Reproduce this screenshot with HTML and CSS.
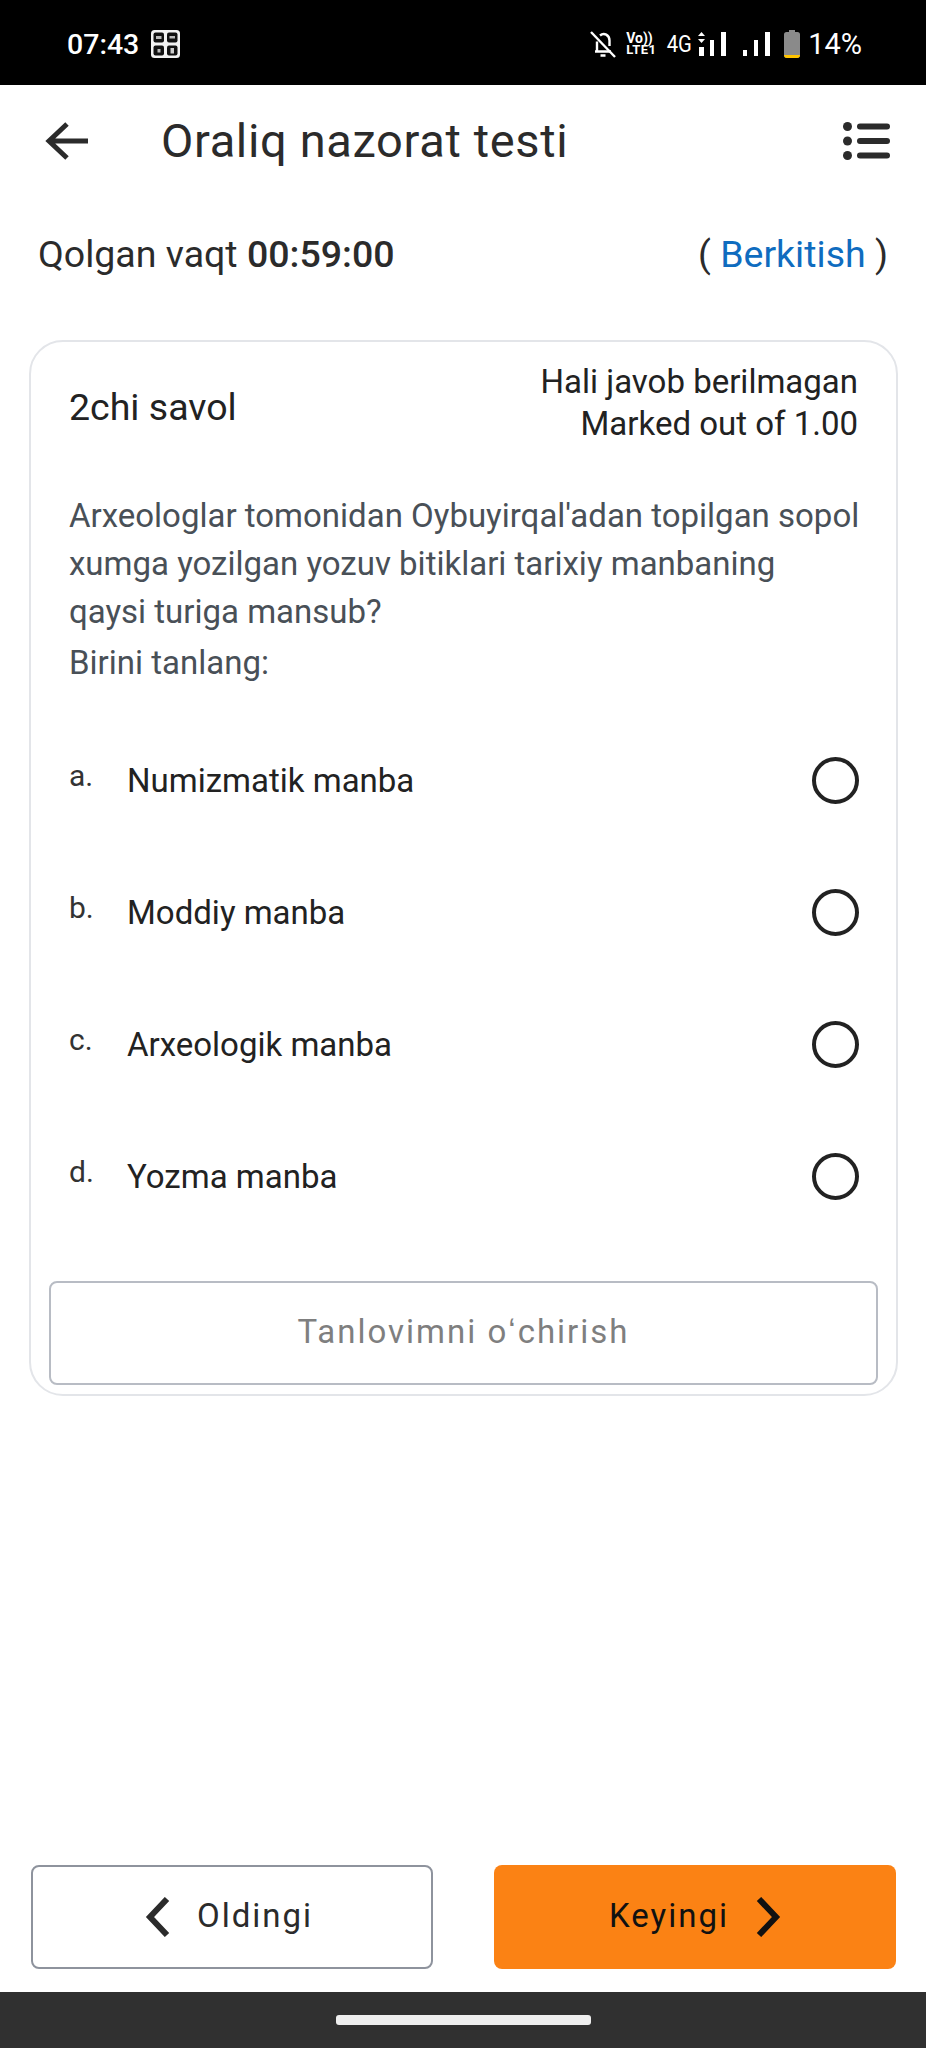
FILE: index.html
```html
<!DOCTYPE html>
<html lang="uz">
<head>
<meta charset="utf-8">
<title>Oraliq nazorat testi</title>
<link rel="stylesheet" href="styles.css">
</head>
<body>
<div class="page">
  <header class="status">
    <div class="status-left">
      <span class="clock">07:43</span>
      <svg class="grid-icon" width="29" height="28" viewBox="0 0 29 28"><rect x="0" y="0" width="29" height="28" rx="3.500" fill="#f2f2f2"/><rect x="2.500" y="2.500" width="10.500" height="10" rx="2" fill="#111"/><rect x="16" y="2.500" width="10.500" height="10" rx="2" fill="#111"/><rect x="2.500" y="15.500" width="10.500" height="10" rx="2" fill="#111"/><rect x="16" y="15.500" width="10.500" height="10" rx="2" fill="#111"/><rect x="5" y="6" width="5.500" height="3" fill="#bbb"/><rect x="18.500" y="6" width="5.500" height="2.500" fill="#bbb"/><rect x="6.500" y="19" width="3" height="3.500" fill="#bbb"/><rect x="19.500" y="18" width="3.500" height="5.500" fill="#ccc"/></svg>
    </div>
    <div class="status-right">
      <svg width="26" height="28" viewBox="0 0 26 28" fill="none" stroke="#fff" stroke-width="2.400"><path d="M5 21.500h16M7 21V11.500M10 5.500c4-3.500 9.500-.5 9.500 5V16M10.500 25.500h5" /><path d="M1 2l24 25"/></svg>
      <span class="volte"><span class="vo">Vo))</span><span class="lte">LTE1</span></span>
      <span class="net">4G</span>
      <svg width="28" height="24" viewBox="0 0 28 24" fill="#fff"><path d="M3.500 0l3.500 4H0zM3.500 11L0 7h7z"/><rect x="1" y="15" width="5" height="9"/><rect x="12" y="8" width="4" height="16"/><rect x="23" y="0" width="5" height="24"/></svg>
      <svg class="sig2" width="27" height="24" viewBox="0 0 27 24" fill="#fff"><rect x="0" y="18" width="4" height="6"/><rect x="11" y="8" width="4" height="16"/><rect x="22" y="0" width="5" height="24"/></svg>
      <svg class="batt" width="16" height="28" viewBox="0 0 16 28"><path d="M5 0h6v2h2.500A2.500 2.500 0 0 1 16 4.500V25a3 3 0 0 1-3 3H3a3 3 0 0 1-3-3V4.500A2.500 2.500 0 0 1 2.500 2H5z" fill="#8a8a8a"/><path d="M0 25h16a3 3 0 0 1-3 3H3a3 3 0 0 1-3-3z" fill="#ffc400"/></svg>
      <span class="pct">14%</span>
    </div>
  </header>

  <div class="titlebar">
    <svg class="back" width="44" height="40" viewBox="0 0 44 40" fill="none" stroke="#2b2b2b" stroke-width="5"><path d="M43 20H5M22 3L4 20l18 17"/></svg>
    <h1 class="title">Oraliq nazorat testi</h1>
    <svg class="menu" width="47" height="38" viewBox="0 0 47 38" fill="#2b2b2b"><circle cx="4.500" cy="4.500" r="4.500"/><circle cx="4.500" cy="19" r="4.500"/><circle cx="4.500" cy="33.500" r="4.500"/><rect x="14" y="1.500" width="33" height="6" rx="3"/><rect x="14" y="16" width="33" height="6" rx="3"/><rect x="14" y="30.500" width="33" height="6" rx="3"/></svg>
  </div>

  <div class="timer-row">
    <div class="timer">Qolgan vaqt <b>00:59:00</b></div>
    <div class="pin">( <a class="pin-link">Berkitish</a> )</div>
  </div>

  <section class="card">
    <div class="card-head">
      <div class="q-num">2chi savol</div>
      <div class="q-state">
        <div>Hali javob berilmagan</div>
        <div>Marked out of 1.00</div>
      </div>
    </div>
    <p class="q-text">Arxeologlar tomonidan Oybuyirqal'adan topilgan sopol<br>xumga yozilgan yozuv bitiklari tarixiy manbaning<br>qaysi turiga mansub?</p>
    <p class="q-hint">Birini tanlang:</p>
    <div class="options">
      <div class="opt"><span class="opt-l">a.</span><span class="opt-t">Numizmatik manba</span><span class="radio"></span></div>
      <div class="opt"><span class="opt-l">b.</span><span class="opt-t">Moddiy manba</span><span class="radio"></span></div>
      <div class="opt"><span class="opt-l">c.</span><span class="opt-t">Arxeologik manba</span><span class="radio"></span></div>
      <div class="opt"><span class="opt-l">d.</span><span class="opt-t">Yozma manba</span><span class="radio"></span></div>
    </div>
    <button class="clear">Tanlovimni oʻchirish</button>
  </section>

  <div class="spacer"></div>

  <nav class="pager">
    <button class="pg pg-prev">
      <svg width="26" height="40" viewBox="0 0 26 40" fill="none" stroke="#2b2b2b" stroke-width="6"><path d="M22 2L5 20l17 18"/></svg>
      <span class="pg-label">Oldingi</span>
    </button>
    <button class="pg pg-next">
      <span class="pg-label">Keyingi</span>
      <svg width="26" height="40" viewBox="0 0 26 40" fill="none" stroke="#111" stroke-width="6"><path d="M4 2l17 18L4 38"/></svg>
    </button>
  </nav>

  <footer class="navbar"><div class="pill"></div></footer>
</div>
</body>
</html>
```

FILE: styles.css
```css
* { box-sizing: border-box; }
html, body { margin: 0; padding: 0; background: #fff; }
body { font-family: Roboto, "Liberation Sans", sans-serif; color: #2b2b2b; }
.page { width: 926px; height: 2048px; display: flex; flex-direction: column; overflow: hidden; }

.status { height: 85px; flex: none; background: #000; color: #fff; display: flex; justify-content: space-between; align-items: center; padding: 3px 64px 0 67px; }
.status-left, .status-right { display: flex; align-items: center; }
.clock { font-size: 28.5px; font-weight: 500; }
.grid-icon { margin-left: 12px; }
.status-right svg { flex: none; }
.volte { display: flex; flex-direction: column; margin-left: 10px; font-weight: 700; line-height: 12px; align-items: flex-start; }
.vo { font-size: 14px; }
.lte { font-size: 13px; letter-spacing: .5px; }
.net { font-size: 23px; margin-left: 8px; font-weight: 400; transform: scaleX(.88); }
.net + svg { margin-left: 5px; }
.sig2 { margin-left: 17px; }
.batt { margin-left: 14px; }
.pct { font-size: 29px; margin-left: 8px; }

.titlebar { height: 112px; flex: none; display: flex; align-items: center; padding: 0 36px 0 45px; }
.back { flex: none; }
.title { flex: 1; margin: 0 0 0 72px; font-size: 47px; font-weight: 400; letter-spacing: .65px; line-height: 60px; color: #2b2b2b; }
.menu { flex: none; }

.timer-row { flex: none; display: flex; justify-content: space-between; align-items: center; height: 60px; margin-top: 27px; padding: 0 38px; font-size: 37.5px; }
.timer b { font-weight: 500; }
.pin-link { color: #0f6cbf; }

.card { flex: none; margin: 56px 28px 0 29px; height: 1056px; border: 2px solid #e3e5e9; border-radius: 34px; padding: 0 18px; display: flex; flex-direction: column; }
.card-head { display: flex; justify-content: space-between; align-items: center; padding: 19px 20px 0; }
.q-num { font-size: 37.5px; color: #222; transform: translateY(3.500px); }
.q-state { font-size: 33px; line-height: 42px; text-align: right; color: #222; }
.q-text { margin: 47px 0 0 20px; font-size: 33px; line-height: 48px; color: #495057; }
.q-hint { margin: 3px 20px 0; font-size: 33px; line-height: 48px; color: #495057; }
.options { margin-top: 27px; display: flex; flex-direction: column; padding: 0 19px 0 20px; }
.opt { height: 132px; display: flex; align-items: center; }
.opt-l { width: 58px; font-size: 30px; color: #333; transform: translateY(-5px); }
.opt-t { flex: 1; font-size: 33px; color: #222; }
.radio { width: 47px; height: 47px; border: 4.500px solid #222; border-radius: 50%; flex: none; }
.clear { margin-top: 39px; height: 104px; flex: none; background: #fff; border: 2px solid #b8bcc4; border-radius: 8px; padding-bottom: 5px; font-family: inherit; font-size: 33px; letter-spacing: 2px; color: #7f7f7f; }

.spacer { flex: 1; }
.pager { flex: none; display: flex; justify-content: space-between; padding: 0 30px 0 31px; margin-bottom: 23px; }
.pg { width: 402px; height: 104px; border-radius: 8px; display: flex; align-items: center; justify-content: center; font-family: inherit; font-size: 33px; letter-spacing: 2px; }
.pg-label { margin-bottom: 3px; }
.pg-prev { background: #fff; border: 2px solid #8e939d; gap: 26px; color: #2b2b2b; padding-right: 12px; }
.pg-next { background: #fb8214; border: 0; gap: 26px; color: #111; }
.navbar { height: 56px; flex: none; background: #303030; display: flex; align-items: center; justify-content: center; }
.pill { width: 255px; height: 10px; border-radius: 3px; background: #eee; }
```
